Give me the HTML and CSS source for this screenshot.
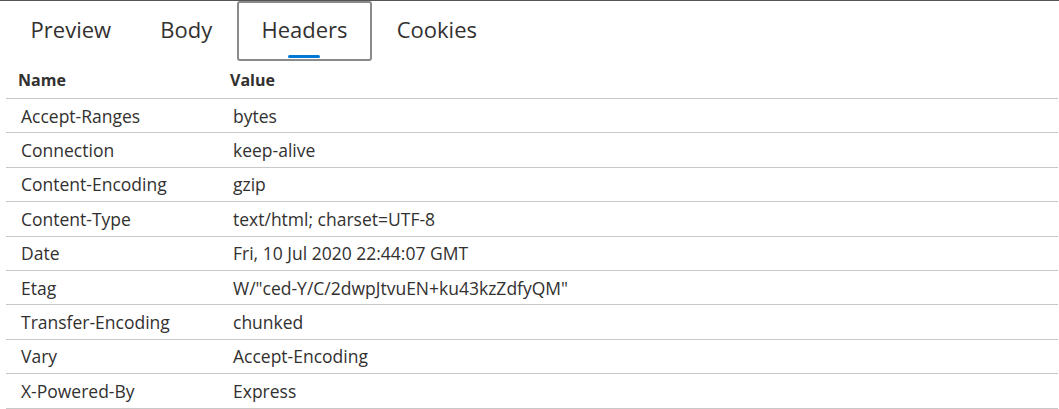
FILE: index.html
```html
<!DOCTYPE html>
<html>
<head>
<meta charset="utf-8">
<link rel="stylesheet" href="styles.css">
</head>
<body>
<div class="panel">
  <div class="tabs">
    <div class="tab">Preview</div>
    <div class="tab">Body</div>
    <div class="tab active">Headers</div>
    <div class="tab">Cookies</div>
  </div>
  <div class="table">
    <div class="row head"><div class="c1">Name</div><div class="c2">Value</div></div>
    <div class="row"><div class="c1">Accept-Ranges</div><div class="c2">bytes</div></div>
    <div class="row"><div class="c1">Connection</div><div class="c2">keep-alive</div></div>
    <div class="row"><div class="c1">Content-Encoding</div><div class="c2">gzip</div></div>
    <div class="row"><div class="c1">Content-Type</div><div class="c2">text/html; charset=UTF-8</div></div>
    <div class="row"><div class="c1">Date</div><div class="c2">Fri, 10 Jul 2020 22:44:07 GMT</div></div>
    <div class="row"><div class="c1">Etag</div><div class="c2">W/"ced-Y/C/2dwpJtvuEN+ku43kzZdfyQM"</div></div>
    <div class="row"><div class="c1">Transfer-Encoding</div><div class="c2">chunked</div></div>
    <div class="row"><div class="c1">Vary</div><div class="c2">Accept-Encoding</div></div>
    <div class="row"><div class="c1">X-Powered-By</div><div class="c2">Express</div></div>
  </div>
</div>
</body>
</html>
```
FILE: styles.css
```css
html, body {
  margin: 0;
  padding: 0;
  background: #ffffff;
}
.panel {
  border-top: 1px solid #555555;
  font-family: "Open Sans", "Noto Sans", sans-serif;
  color: #323130;
}
.tabs {
  display: flex;
  padding-left: 6px;
  height: 60px;
}
.tab {
  position: relative;
  box-sizing: border-box;
  padding: 0 22.6px;
  height: 60px;
  line-height: 53px;
  font-size: 22px;
  border: 2px solid transparent;
  border-radius: 3px;
}
.tab.active {
  border-color: #8a8a8a;
}
.tab.active::after {
  content: "";
  position: absolute;
  left: 50%;
  bottom: 1px;
  width: 32px;
  height: 3px;
  margin-left: -16px;
  border-radius: 2px;
  background: #0078d4;
}
.table {
  margin: 0 1px 0 6px;
}
.row {
  display: flex;
  align-items: center;
  height: 33.4px;
  border-bottom: 1px solid #c8c8c8;
  font-size: 17.5px;
}
.row.head {
  height: 37px;
  font-size: 16px;
  font-weight: 700;
}
.c1 {
  width: 212px;
  padding-left: 15px;
}
.head .c1 {
  padding-left: 12px;
}
```
